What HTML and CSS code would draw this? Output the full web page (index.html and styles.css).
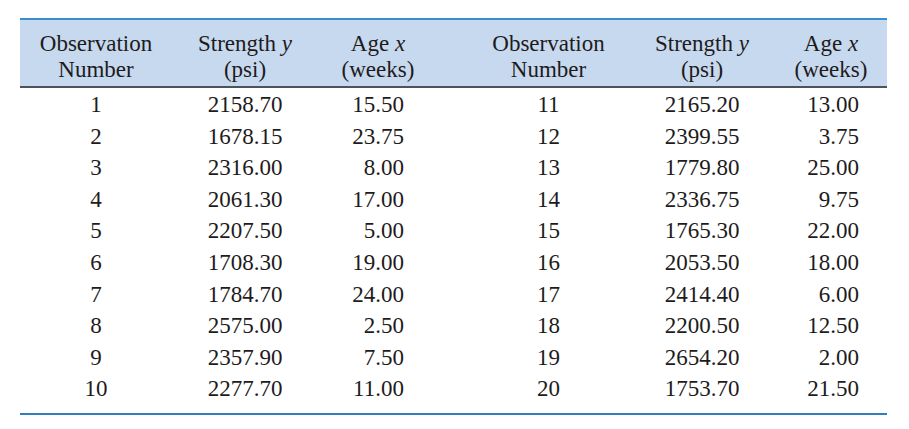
FILE: index.html
```html
<!DOCTYPE html>
<html lang="en">
<head>
<meta charset="utf-8">
<title>Observations</title>
<link rel="stylesheet" href="styles.css">
</head>
<body>
<table class="data">
  <colgroup>
    <col class="c-obs">
    <col class="c-str">
    <col class="c-age">
    <col class="c-obs2">
    <col class="c-str2">
    <col class="c-age2">
  </colgroup>
  <thead>
    <tr>
      <th class="obs">Observation<br>Number</th>
      <th class="str">Strength <i>y</i><br>(psi)</th>
      <th class="age">Age <i>x</i><br>(weeks)</th>
      <th class="obs2">Observation<br>Number</th>
      <th class="str">Strength <i>y</i><br>(psi)</th>
      <th class="age">Age <i>x</i><br>(weeks)</th>
    </tr>
  </thead>
  <tbody>
    <tr><td class="obs">1</td><td class="str">2158.70</td><td class="age">15.50</td><td class="obs2">11</td><td class="str">2165.20</td><td class="age2">13.00</td></tr>
    <tr><td class="obs">2</td><td class="str">1678.15</td><td class="age">23.75</td><td class="obs2">12</td><td class="str">2399.55</td><td class="age2">3.75</td></tr>
    <tr><td class="obs">3</td><td class="str">2316.00</td><td class="age">8.00</td><td class="obs2">13</td><td class="str">1779.80</td><td class="age2">25.00</td></tr>
    <tr><td class="obs">4</td><td class="str">2061.30</td><td class="age">17.00</td><td class="obs2">14</td><td class="str">2336.75</td><td class="age2">9.75</td></tr>
    <tr><td class="obs">5</td><td class="str">2207.50</td><td class="age">5.00</td><td class="obs2">15</td><td class="str">1765.30</td><td class="age2">22.00</td></tr>
    <tr><td class="obs">6</td><td class="str">1708.30</td><td class="age">19.00</td><td class="obs2">16</td><td class="str">2053.50</td><td class="age2">18.00</td></tr>
    <tr><td class="obs">7</td><td class="str">1784.70</td><td class="age">24.00</td><td class="obs2">17</td><td class="str">2414.40</td><td class="age2">6.00</td></tr>
    <tr><td class="obs">8</td><td class="str">2575.00</td><td class="age">2.50</td><td class="obs2">18</td><td class="str">2200.50</td><td class="age2">12.50</td></tr>
    <tr><td class="obs">9</td><td class="str">2357.90</td><td class="age">7.50</td><td class="obs2">19</td><td class="str">2654.20</td><td class="age2">2.00</td></tr>
    <tr class="last"><td class="obs">10</td><td class="str">2277.70</td><td class="age">11.00</td><td class="obs2">20</td><td class="str">1753.70</td><td class="age2">21.50</td></tr>
  </tbody>
</table>
</body>
</html>
```

FILE: styles.css
```css
html, body {
  margin: 0;
  padding: 0;
  background: #ffffff;
}

body {
  padding: 18px 0 0 20px;
  font-family: "Liberation Serif", "Times New Roman", serif;
  font-size: 23px;
  color: #1e1b1c;
}

.data {
  border-collapse: collapse;
  table-layout: fixed;
  width: 867px;
  border-top: 2px solid #3a8dd0;
  border-bottom: 2px solid #2f7fbd;
}

.c-obs { width: 152px; }
.c-str { width: 146px; }
.c-age { width: 120px; }
.c-obs2 { width: 191px; }
.c-str2 { width: 146px; }
.c-age2 { width: 112px; }

.data th,
.data td {
  padding: 0;
  font-weight: normal;
  white-space: nowrap;
}

.data thead th {
  background: #c7d9ee;
  line-height: 26px;
  padding-top: 11px;
  padding-bottom: 3px;
  text-align: center;
  border-bottom: 2px solid #4d535b;
}

.data thead th.obs2 {
  padding-left: 30px;
}

.data i {
  font-style: italic;
}

.data tbody td {
  line-height: 31.6px;
}

.data tbody tr:first-child td {
  padding-top: 1px;
}

.data tbody tr.last td {
  padding-bottom: 8px;
}

.data td.obs,
.data td.str {
  text-align: center;
}

.data td.obs2 {
  text-align: center;
  padding-left: 30px;
}

.data td.age {
  text-align: right;
  padding-right: 34px;
}

.data td.age2 {
  text-align: right;
  padding-right: 28px;
}
```
